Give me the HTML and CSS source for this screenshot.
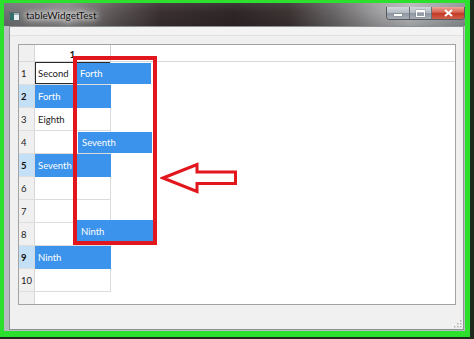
FILE: index.html
```html
<!DOCTYPE html>
<html>
<head>
<meta charset="utf-8">
<title>tableWidgetTest</title>
<link rel="stylesheet" href="styles.css">
</head>
<body>
<div class="screen">
  <div class="window">
    <div class="titlebar">
      <svg class="app-icon" width="11" height="9" viewBox="0 0 11 9">
        <rect x="0.5" y="0.5" width="10" height="8" fill="#e8eef0" stroke="#5d6a6e"/>
        <rect x="1" y="1" width="4" height="7" fill="#2f6f6a"/>
        <rect x="5" y="1" width="5" height="2" fill="#9fb3b8"/>
      </svg>
      <span class="title">tableWidgetTest</span>
      <div class="caption-buttons">
        <div class="cap cap-min"><span class="glyph-min"></span></div>
        <div class="cap cap-max"><span class="glyph-max"></span></div>
        <div class="cap cap-close">
          <svg width="9" height="8" viewBox="0 0 9 8"><path d="M1 1 L8 7 M8 1 L1 7" stroke="#fff" stroke-width="2"/></svg>
        </div>
      </div>
    </div>
    <div class="client">
      <div class="toolbar"></div>
      <div class="table">
        <div class="corner"></div>
        <div class="hcol">1</div>
        <div class="hfill"></div>

        <div class="rh">1</div><div class="cell focus">Second</div><div class="fill"></div>
        <div class="rh sel">2</div><div class="cell sel">Forth</div><div class="fill"></div>
        <div class="rh">3</div><div class="cell">Eighth</div><div class="fill"></div>
        <div class="rh">4</div><div class="cell"></div><div class="fill"></div>
        <div class="rh sel">5</div><div class="cell sel">Seventh</div><div class="fill"></div>
        <div class="rh">6</div><div class="cell"></div><div class="fill"></div>
        <div class="rh">7</div><div class="cell"></div><div class="fill"></div>
        <div class="rh">8</div><div class="cell"></div><div class="fill"></div>
        <div class="rh sel">9</div><div class="cell sel">Ninth</div><div class="fill"></div>
        <div class="rh">10</div><div class="cell"></div><div class="fill"></div>

        <div class="rh-end"></div><div class="fill-end"></div><div class="fill-end"></div>

        <div class="drag drag-forth">Forth</div>
        <div class="drag drag-seventh">Seventh</div>
        <div class="drag drag-ninth">Ninth</div>
        <div class="red-box"></div>
        <svg class="arrow" width="78" height="34" viewBox="0 0 78 34">
          <path d="M3 17 L37 3.5 L37 11 L75.5 11 L75.5 22.5 L37 22.5 L37 30.5 Z" fill="#fff" stroke="#e2161d" stroke-width="3" stroke-linejoin="miter"/>
        </svg>
      </div>
      <div class="statusbar">
        <svg class="grip" width="9" height="9" viewBox="0 0 9 9">
          <rect x="7" y="1" width="1.5" height="1.5" fill="#b5b5b5"/>
          <rect x="4" y="4" width="1.5" height="1.5" fill="#b5b5b5"/>
          <rect x="7" y="4" width="1.5" height="1.5" fill="#b5b5b5"/>
          <rect x="1" y="7" width="1.5" height="1.5" fill="#b5b5b5"/>
          <rect x="4" y="7" width="1.5" height="1.5" fill="#b5b5b5"/>
          <rect x="7" y="7" width="1.5" height="1.5" fill="#b5b5b5"/>
        </svg>
      </div>
    </div>
  </div>
</div>
</body>
</html>
```

FILE: styles.css
```css
html, body {
  margin: 0;
  padding: 0;
}
body {
  width: 474px;
  height: 339px;
  background: #1d2a1d;
  font-family: Lato, "Noto Sans", "DejaVu Sans", sans-serif;
  overflow: hidden;
}
.screen {
  box-sizing: border-box;
  width: 470px;
  height: 337px;
  border-style: solid;
  border-color: #2ee02e;
  border-width: 3px 5px 6px 4px;
}
.window {
  height: 100%;
  display: flex;
  flex-direction: column;
  background: #b7bcc1;
}
.titlebar {
  height: 23px;
  flex: none;
  display: flex;
  align-items: flex-start;
  background:
    linear-gradient(180deg, rgba(255,255,255,0.08) 0%, rgba(0,0,0,0) 40%, rgba(0,0,0,0.15) 100%),
    linear-gradient(90deg, #6f7275 0%, #7d7b7c 6%, #8a8888 14%, #5c5556 24%, #3a3031 34%, #2f2627 50%, #3d3434 62%, #6b6869 72%, #a3a3a5 82%, #b6b8bb 88%, #8f9397 100%);
}
.app-icon {
  margin: 9px 0 0 5px;
  flex: none;
}
.title {
  margin: 6px 0 0 6px;
  font-size: 10px;
  line-height: 12px;
  color: #111;
  text-shadow: 0 0 4px #fff, 0 0 7px #e8e8e8, 0 0 10px #ddd;
}
.caption-buttons {
  margin: 4px 0 0 auto;
  display: flex;
  height: 12px;
  border: 1px solid #55595e;
  border-top: none;
  border-radius: 0 0 4px 4px;
  overflow: hidden;
}
.cap {
  display: flex;
  align-items: center;
  justify-content: center;
  height: 12px;
}
.cap-min, .cap-max {
  width: 22px;
  background: linear-gradient(180deg, #d3d7dc 0%, #b5bcc4 45%, #8f98a2 55%, #a6adb5 100%);
  border-right: 1px solid #6a7077;
}
.cap-max {
  width: 21px;
}
.cap-close {
  width: 32px;
  background: linear-gradient(180deg, #eba699 0%, #d5614f 45%, #c23a25 55%, #d0604c 100%);
}
.glyph-min {
  width: 8px;
  height: 2px;
  margin-top: 4px;
  background: #fff;
  box-shadow: 0 0 1px #444;
}
.glyph-max {
  width: 7px;
  height: 4px;
  border: 1px solid #fff;
  border-top-width: 2px;
  box-shadow: 0 0 1px #444;
}
.client {
  flex: 1;
  margin: 0 1px 1px 5px;
  border: 1px solid #8c9196;
  background: #f0f0f0;
  display: flex;
  flex-direction: column;
  padding: 0 7px 0 8px;
  min-height: 0;
}
.toolbar {
  height: 8px;
  flex: none;
  margin: 0 -7px 8px -8px;
  border-bottom: 1px solid #e2e2e2;
  background: #f3f3f3;
}
.table {
  position: relative;
  height: 261px;
  flex: none;
  box-sizing: border-box;
  border: 1px solid #a3a3a3;
  background: #fff;
  display: grid;
  grid-template-columns: 16px 76px 1fr;
  grid-template-rows: 17px repeat(10, 23px) 1fr;
  font-size: 9.5px;
  color: #1a1a1a;
}
.corner {
  background: #f0f0f0;
  border-right: 1px solid #d6d6d6;
  border-bottom: 1px solid #d6d6d6;
}
.hcol {
  box-sizing: border-box;
  background: #fff;
  border-right: 1px solid #cfcfcf;
  border-bottom: 1px solid #d6d6d6;
  font-weight: 700;
  text-align: center;
  line-height: 18px;
  font-size: 10px;
}
.hfill {
  background: #fff;
  border-bottom: 1px solid #d6d6d6;
}
.rh {
  box-sizing: border-box;
  background: #f0f0f0;
  border-right: 1px solid #d6d6d6;
  border-bottom: 1px solid #dedede;
  padding-left: 2px;
  display: flex;
  align-items: center;
  color: #222;
}
.rh.sel {
  background: #c3e0f7;
  font-weight: 700;
  color: #111;
}
.cell {
  box-sizing: border-box;
  border-right: 1px solid #dcdcdc;
  border-bottom: 1px solid #dcdcdc;
  padding-left: 3px;
  display: flex;
  align-items: center;
  white-space: nowrap;
  overflow: hidden;
}
.cell.sel {
  background: #3b93ec;
  color: #fff;
  border-color: #3b93ec;
}
.cell.focus {
  box-shadow: inset 0 0 0 1px #2a2a2a;
}
.fill, .fill-end {
  background: #fff;
}
.rh-end {
  background: #f0f0f0;
  border-right: 1px solid #d6d6d6;
}
.drag {
  position: absolute;
  left: 57px;
  width: 75px;
  height: 21px;
  box-sizing: border-box;
  padding-left: 4px;
  background: #3b93ec;
  color: #fff;
  font-size: 9.5px;
  display: flex;
  align-items: center;
}
.drag-forth {
  top: 18px;
}
.drag-seventh {
  top: 87px;
  left: 59px;
  width: 74px;
}
.drag-ninth {
  top: 175px;
  left: 58px;
  width: 76px;
  height: 22px;
}
.red-box {
  position: absolute;
  left: 54px;
  top: 11px;
  width: 84px;
  height: 189px;
  box-sizing: border-box;
  border: 4px solid #e2161d;
}
.arrow {
  position: absolute;
  left: 141px;
  top: 116px;
}
.statusbar {
  flex: 1;
  display: flex;
  align-items: flex-end;
  justify-content: flex-end;
  padding-bottom: 1px;
  margin-right: -6px;
}
```
